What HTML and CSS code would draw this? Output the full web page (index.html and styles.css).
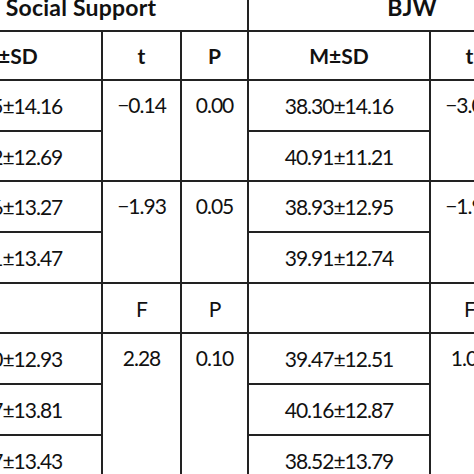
FILE: index.html
```html
<!DOCTYPE html>
<html>
<head>
<meta charset="utf-8">
<link rel="stylesheet" href="styles.css">
</head>
<body>
<div class="viewport">
  <table class="stats">
    <colgroup>
      <col class="c-msd-first">
      <col class="c-t">
      <col class="c-p">
      <col class="c-msd">
      <col class="c-t">
      <col class="c-p">
    </colgroup>
    <tr class="title-row">
      <th colspan="3" class="group">Social Support</th>
      <th colspan="3" class="group">BJW</th>
    </tr>
    <tr class="head-row">
      <th>M±SD</th><th>t</th><th>P</th>
      <th>M±SD</th><th>t</th><th>P</th>
    </tr>
    <tr>
      <td>37.35±14.16</td><td rowspan="2" class="span">−0.14</td><td rowspan="2" class="span">0.00</td>
      <td>38.30±14.16</td><td rowspan="2" class="span">−3.02</td><td rowspan="2" class="span">0.00</td>
    </tr>
    <tr>
      <td>37.42±12.69</td>
      <td>40.91±11.21</td>
    </tr>
    <tr>
      <td>36.86±13.27</td><td rowspan="2" class="span">−1.93</td><td rowspan="2" class="span">0.05</td>
      <td>38.93±12.95</td><td rowspan="2" class="span">−1.96</td><td rowspan="2" class="span">0.05</td>
    </tr>
    <tr>
      <td>37.81±13.47</td>
      <td>39.91±12.74</td>
    </tr>
    <tr>
      <td></td><td>F</td><td>P</td>
      <td></td><td>F</td><td>P</td>
    </tr>
    <tr>
      <td>37.30±12.93</td><td rowspan="3" class="span">2.28</td><td rowspan="3" class="span">0.10</td>
      <td>39.47±12.51</td><td rowspan="3" class="span">1.05</td><td rowspan="3" class="span">0.35</td>
    </tr>
    <tr>
      <td>38.17±13.81</td>
      <td>40.16±12.87</td>
    </tr>
    <tr>
      <td>36.47±13.43</td>
      <td>38.52±13.79</td>
    </tr>
  </table>
</div>
</body>
</html>
```

FILE: styles.css
```css
html, body {
  margin: 0;
  padding: 0;
  background: #ffffff;
}

.viewport {
  width: 474px;
  height: 474px;
  overflow: hidden;
}

.stats {
  border-collapse: collapse;
  table-layout: fixed;
  width: 582px;
  margin: -17px 0 0 -87px;
  font-family: Lato, "Liberation Sans", sans-serif;
  font-size: 21px;
  letter-spacing: -1px;
  color: #111111;
}

.c-msd-first { width: 188px; }
.c-msd { width: 182px; }
.c-t { width: 79px; }
.c-p { width: 67px; }

.stats th,
.stats td {
  border: 2px solid #222222;
  padding: 0;
  text-align: center;
  vertical-align: middle;
  white-space: nowrap;
  height: 48.7px;
  font-weight: 400;
}

.stats th {
  font-weight: 700;
  letter-spacing: 0;
}

.stats td.span {
  vertical-align: top;
  line-height: 48px;
}

.title-row th {
  border-top: none;
  height: 47px;
  font-size: 23px;
  letter-spacing: 0.2px;
}

.head-row th {
  height: 47px;
}
```
